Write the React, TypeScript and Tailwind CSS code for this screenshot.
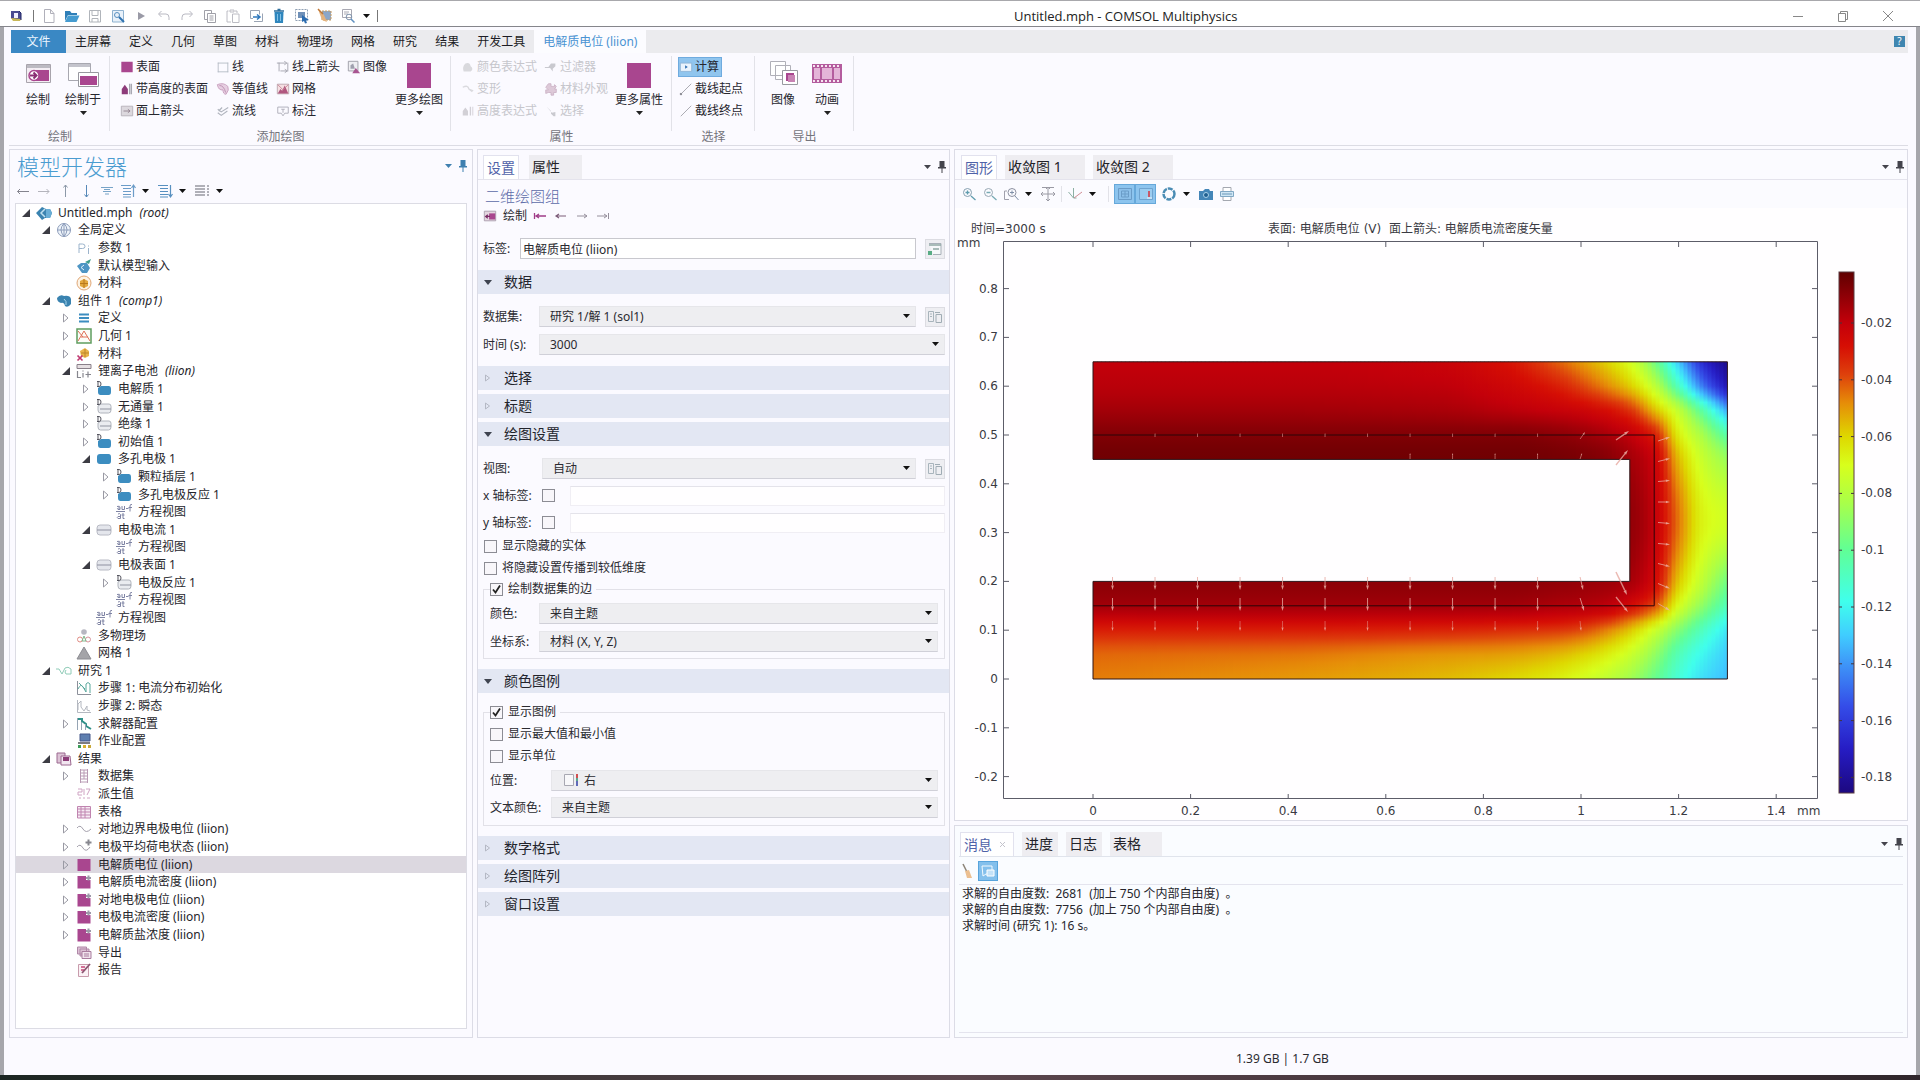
import { useMemo, type ReactNode } from 'react'
import { clsx } from 'clsx'

const BLUE = '#3c8dc0'
const PURPLE = '#a9468f'
const GRAY = '#9a9aa4'

/* ---------- icons ---------- */

function Svg({ children, size = 16 }: { children: ReactNode; size?: number }) {
  return (
    <svg width={size} height={size} viewBox="0 0 16 16" fill="none" aria-hidden="true" className="shrink-0">
      {children}
    </svg>
  )
}

function Caret({ className = 'fill-[#111]' }: { className?: string }) {
  return (
    <svg width="7" height="4" viewBox="0 0 7 4" aria-hidden="true" className={clsx('shrink-0', className)}>
      <path d="M0 0h7L3.5 4z" />
    </svg>
  )
}

function Pin({ color = '#44444c' }: { color?: string }) {
  return (
    <svg width="8" height="12" viewBox="0 0 8 12" aria-hidden="true">
      <path d="M1.500 0h5v6H8v1.500H4.500V12h-1V7.500H0V6h1.500z" fill={color} />
    </svg>
  )
}

const blob = 'M4 3h8.500q2.500 0 2.500 3v4q0 3-2.500 3H4q-3 0-3-3V6q0-3 3-3z'
const smallBlob = 'M5 5h8q2 0 2 2.500v3.500q0 3-2.500 3h-8Q2 14 2 11V7z'
const letterD = <path d="M1 .500h2q2 0 2 2.500t-2 2.500H1M2 .500v5" stroke="#55555f" />

const icons: Record<string, ReactNode> = {
  logo: (
    <>
      <path d="M3 3h8l2 2v7H5l-2-2z" fill="#4a4a90" />
      <path d="M6 5h4v5H6z" fill="#f2f0ff" />
      <path d="M3 10l2 3h7l1-2z" fill="#c8b858" />
      <path d="M11 3l2 2v7" stroke="#222868" />
    </>
  ),
  newDoc: <path d="M3.500 1.500h6l3.500 4v9H3.500zM9.500 1.500v4H13" stroke="#b0b0ba" />,
  open: (
    <>
      <path d="M1 3h5l1.500 2H13v2H4l-3 6z" fill="#2f7fb8" />
      <path d="M4 7.500h11.500L12.500 14H1z" fill="#459bd0" />
    </>
  ),
  save: <path d="M2.500 2.500h11v11.500h-11zM5 2.500v5h6v-5M5 14v-3.500h6V14" stroke="#b0b4ba" />,
  saveAs: (
    <>
      <path d="M2.500 2.500h11v11.500h-11z" stroke="#8fb2d0" fill="#e8f1fa" />
      <circle cx="7" cy="7" r="2.500" stroke="#5890c0" />
      <path d="M9 9l5 5" stroke="#2f72b0" strokeWidth="2" />
    </>
  ),
  play: <path d="M5 4v8l7-4z" fill="#9a9aa6" />,
  undo: <path d="M5.500 3L2.500 6l3 3M3 6h7q3 0 3 3.500V12" stroke="#b9b9c2" />,
  redo: <path d="M10.500 3l3 3-3 3M13 6H6Q3 6 3 9.500V12" stroke="#b9b9c2" />,
  copy: <path d="M2.500 2.500h7V5M2.500 2.500v9H5M5.500 5.500h8v9h-8zM7.500 8h4M7.500 10h4M7.500 12h4" stroke="#a0a0a8" />,
  paste: <path d="M3.500 3H2v11h4M5 2h4v2H5zM10 3h2v2M7.500 6h6.500v8.500H7.500z" stroke="#bcbcc4" />,
  duplicate: (
    <>
      <path d="M2.500 2.500h9v4M2.500 2.500v8H5M6 13.500h8.500v-8" stroke="#9aa4b4" />
      <path d="M5 9h6M9 6.500L12 9l-3 2.500" stroke="#2f78bc" strokeWidth="1.500" />
    </>
  ),
  trash: (
    <>
      <path d="M3.500 4h9l-.500 11H4z" fill="#2f86bd" />
      <path d="M3 3h10M6.500 1.500h3" stroke="#2f6f9d" strokeWidth="1.500" />
      <path d="M6.500 6v7M9.500 6v7" stroke="#7fc0e6" />
    </>
  ),
  select: (
    <>
      <path d="M1.500 1.500h12v11h-12z" stroke="#90a0b4" strokeDasharray="2 1" />
      <path d="M4 4h7v6H4z" fill="#6f90b8" />
      <path d="M8 7l7 5-3 .500L13 15l-2 .500-1-2.500-2 1z" fill="#2c6cb0" />
    </>
  ),
  brush: (
    <>
      <path d="M5 3h9v9H5z" fill="#8ba6c8" stroke="#c89c60" strokeDasharray="2 1" />
      <path d="M1 1l6 6 3 7-5-2z" fill="#e5b27c" />
      <path d="M1 1l5 5" stroke="#c07838" strokeWidth="1.500" />
    </>
  ),
  find: (
    <>
      <path d="M2.500 1.500h9v8h-9zM4 4h5M4 6h4" stroke="#a8a8b2" />
      <circle cx="9" cy="9" r="2.800" stroke="#7f93ac" />
      <path d="M11 11l3.500 3.500" stroke="#5f8fc0" strokeWidth="1.500" />
    </>
  ),
  square: <path d="M1.500 2h13v12h-13z" fill={PURPLE} />,
  heightSurface: (
    <>
      <path d="M2 14V8l3.500-5L9 8v6z" fill="#8d3b7a" />
      <path d="M11 2v12M13 2v12" stroke="#a8a8b2" strokeWidth="1.500" />
    </>
  ),
  arrowSurface: (
    <>
      <path d="M1.500 2.500h13v11h-13z" fill="#dcd8de" stroke="#b5b0b8" />
      <path d="M4 8h7M9 6l2.500 2L9 10" stroke="#90808e" />
    </>
  ),
  line: <path d="M2 3.500h12M2.500 3v11M13.500 3v11M2 13.500h12" stroke="#b4bac4" />,
  contour: (
    <>
      <path d="M1.500 3q7-3 12 2 2 4-2 9Q8 14 8 9q-5 1-6.500-6z" fill="#e6cfe1" stroke="#c79dbd" />
      <path d="M4 4q5 0 7 8" stroke="#b98aae" />
    </>
  ),
  stream: <path d="M2 6l4 3 8-5M2 10l4 3 7-5M3 8l4-4" stroke="#b0b4be" strokeWidth="1.300" />,
  lineArrow: <path d="M1 3.500h10M3.500 3v10M13.500 3v10M5 12.500h7M9.500 1.500l3 2-3 2M10 10.500l3 2-3 2" stroke="#a0a0aa" />,
  mesh: (
    <>
      <path d="M1.500 2.500h13v11h-13z" fill="#f5dfe2" stroke="#b9a4ac" />
      <path d="M2 13l3-5 2 2 3-6 4 9z" fill="#b0577f" />
      <path d="M2 3l6 6 6-6" stroke="#c77f92" />
    </>
  ),
  annotate: <path d="M2 3.500h12v7h-4l-2 3-2-3H2zM6 6h4M8 6v4" stroke="#a9a9b5" />,
  image: (
    <>
      <path d="M1.500 1.500h11v11h-11z" stroke="#9a9aa4" fill="#eeeef2" />
      <path d="M4 10V6l3-2 2 6z" fill="#9fa0ae" />
      <path d="M6 15l4-6 5 6z" fill="#a85591" />
    </>
  ),
  dimPalette: <path d="M3 13q-2-5 2-9 5-2 6 3 4 3 0 6z" fill="#d9d9dd" />,
  dimDeform: <path d="M2 6q6-3 7 2l5 2M9 8l4 3" stroke="#dadade" strokeWidth="1.500" />,
  dimHeight: <path d="M2 13V8l3-4 3 4v5zM10 3h1.500v10H10zM13 3h1v10h-1z" fill="#d2d0d6" />,
  dimFilter: <path d="M1 8h4l3-4h5v3l-3 3v3L7 9H1z" fill="#c9c9cf" />,
  dimMaterial: <path d="M5 2h3v3h4V3l2 2-2 3h2v4h-3v3H8v-3H5L2 13V9h3L2 6z" fill="#ddc9d8" stroke="#cbb2c6" />,
  dimSelect: <path d="M3 3l5 5v3l3 3h2V9l-4 1" fill="#c9c9cf" />,
  compute: (
    <>
      <path d="M1.500 3.500h13v9.500h-13z" fill="#eaf4fd" stroke="#8cb2d6" />
      <path d="M7 6v4l3-2z" fill="#2f6fb0" />
    </>
  ),
  cut: <path d="M2 14L14 2" stroke="#a0a0a8" />,
  cutStart: (
    <>
      <path d="M3 13L14 2" stroke="#a0a0a8" />
      <path d="M1 12.500h2.500V15H1z" fill="#909098" />
    </>
  ),
  root: (
    <>
      <path d="M0 8l6-6 4 2h4l2 4-2 5H9l-3 2z" fill="#3a83b0" />
      <path d="M9 4l-4 4 4 4" stroke="#bfe0f0" strokeWidth="1.500" />
      <path d="M10 4h4l2 4-2 5h-4z" fill="#69aed6" />
    </>
  ),
  globe: (
    <>
      <circle cx="8" cy="8" r="6.500" stroke="#8c9cba" fill="#eef4fa" />
      <path d="M1.500 8h13M8 1.500v13M8 1.500q-6 6 0 13M8 1.500q6 6 0 13" stroke="#8c9cba" />
    </>
  ),
  param: <path d="M3 13V4h3.500q2.500 0 2.500 2.300T6.500 8.500H3M12.500 8v6M12.500 5.500v1" stroke="#9cb4cc" />,
  modelInput: (
    <>
      <path d="M1 8l4-3h6l3 5-3 5H6z" fill="#4d95c4" />
      <path d="M8 7l-3 2.500L8 12" stroke="#e4f2fa" />
      <path d="M9 4l6-3-2 5z" fill="#3e9c8c" />
    </>
  ),
  material: (
    <>
      <circle cx="8" cy="8" r="7" stroke="#e0a878" fill="#fdf3e4" />
      <path d="M4 6l4-2 4 2v5l-4 2-4-2z" fill="#e3a83f" />
      <path d="M8 4v9M4 8.500h8" stroke="#b9791c" />
    </>
  ),
  component: (
    <>
      <path d="M1 5q3-4 7-2 6-1 7 3v5q-3 4-6 2-1-4-4-3-4-1-4-5z" fill="#3a83b0" />
      <path d="M8 6q3 2 2 6" stroke="#a5d4ea" />
    </>
  ),
  definitions: <path d="M3 4.500h10M3 8h10M3 11.500h10" stroke={BLUE} strokeWidth="2.200" />,
  geometry: (
    <>
      <path d="M1 1h14v14H1z" stroke="#5f9d5f" fill="#fbfdf8" strokeWidth="1.500" />
      <path d="M2 13L8 3l6 10M5 9h7M2 3l5 6" stroke="#e07058" />
    </>
  ),
  materialX: (
    <>
      <path d="M4 5l5-3 4 3v5l-4 2-4-2z" fill="#e9b44c" />
      <path d="M9 3v8M5 7h8" stroke="#bd8628" />
      <path d="M1.500 9.500l5 5M6.500 9.500l-5 5" stroke="#c03a72" strokeWidth="1.700" />
    </>
  ),
  battery: (
    <>
      <path d="M1 1.500h14v4H1z" stroke="#8a808a" fill="#e6dfe2" />
      <path d="M1.500 8v6.500H5M7 10v4.500M7 7.500v1M12 8.500v6M9.500 11.500H15" stroke="#86868e" strokeWidth="1.200" />
    </>
  ),
  blue: <path d={blob} fill={BLUE} />,
  blueD: (
    <>
      <path d={smallBlob} fill={BLUE} />
      {letterD}
    </>
  ),
  gray: (
    <>
      <path d={blob} fill="#e4e6ec" stroke="#b8bac4" />
      <path d="M1 8h14" stroke="#8e90a0" />
    </>
  ),
  grayD: (
    <>
      <path d={smallBlob} fill="#eaecf0" stroke="#b0b4bc" />
      <path d="M4 10h11" stroke="#9094a0" />
      {letterD}
    </>
  ),
  equation: (
    <path
      d="M1 2.500q3-1 3 1v2H2q-1-1 0-1.500h2M6 2v3.500h2.500V2M0 7.500h9M2 10q2-1 2.500.500v4H2q-1.500-1 0-2h2M7 9v5.500h1.500M5.500 11h3M10 4.500h2.500M16 .500q-2-.500-2 1.500v5.500M12.500 3.500h3.500"
      stroke="#7f84a4"
    />
  ),
  multi: (
    <>
      <circle cx="8" cy="4" r="2.800" fill="#b8b8c2" />
      <circle cx="4" cy="11.500" r="2.500" stroke="#e08c84" />
      <circle cx="12" cy="11.500" r="2.500" stroke="#d8949c" />
      <path d="M6 13l2-5 2 5z" stroke="#7fb88c" />
    </>
  ),
  triangle: <path d="M8 2l7 12H1z" fill="#a4a4a8" stroke="#8c8c92" />,
  study: <path d="M0 6h3l3 5 3-6q3-2 6 1v5h-5q-2-2 0-4" stroke="#90ccb8" />,
  step1: (
    <>
      <path d="M1.500 1v13.500H15" stroke="#8c909a" />
      <path d="M2 9q3-6 5-2l3 5V4q2-3 4 0v9M3 3l6 6" stroke="#58a89c" />
    </>
  ),
  step2: <path d="M1.500 2v12.500H15M2 12V6l3-3v6l3 4 3-5v4l3 1" stroke="#b4b8c0" />,
  solver: (
    <>
      <path d="M1.500 2v12M5.500 5v9" stroke="#96a4b4" />
      <path d="M2 3h4v2l4 3v2l5 3" stroke="#2f9088" strokeWidth="2" />
      <path d="M9.500 8v6" stroke="#96a4b4" />
    </>
  ),
  job: (
    <>
      <path d="M4 1h10v7H4z" fill="#5f7fb0" stroke="#47588a" />
      <path d="M2 10h12" stroke="#505058" strokeWidth="1.500" />
      <path d="M2 12h3v3H2z" fill="#3c9c58" />
      <path d="M7 12h3v3H7z" fill="#d8b030" />
      <path d="M12 12h3v3h-3z" fill="#c8a838" />
    </>
  ),
  results: (
    <>
      <path d="M1 2h8v10H1z" fill="#dcc4d6" stroke="#9c6890" />
      <path d="M5 5h9l1 9H5z" fill="#f2e6f0" stroke="#9c6890" />
      <path d="M7 6h6v4H7z" fill="#8c3c78" />
    </>
  ),
  dataset: <path d="M4 2h8M4 5h8M4 8h8M4 11h8M4 14h8M4.500 1v14M11.500 1v14M8 2v9" stroke="#b99ab4" />,
  derived: <path d="M2 3h4v3H2v3h4M8 3v6M10 3h4l-3 6M3 12h2M7 12h2M11 12h3" stroke="#d0a4c4" />,
  table: <path d="M1.500 2.500h13v11.500h-13zM2 5h12M2 8h12M2 11h12M5 2v12M9 2v12" stroke="#c084b0" fill="#f6eaf3" />,
  wave: <path d="M1 7q3-4 6 1t8 0" stroke="#a4a0ac" />,
  waveStar: (
    <>
      <path d="M1 8q3-4 6 1t7-1" stroke="#a4a0ac" />
      <path d="M9.500 3.500h6M12.500.500v6" stroke="#86868e" strokeWidth="2" />
    </>
  ),
  purpleStar: (
    <>
      <path d="M1.500 2H10v4h4.500v8.500h-13z" fill={PURPLE} />
      <path d="M10 4h5M12.500 1.500v5" stroke="#9c98a8" strokeWidth="2" />
    </>
  ),
  export: (
    <>
      <path d="M1.500 2h9v7h-9zM4 4h9v7H4z" fill="#dcc0d4" stroke="#b088a8" />
      <path d="M6 6.500h9v7H6z" fill="#f0e2ec" stroke="#a87c9e" />
      <path d="M8 9h5M8 11h5" stroke="#a87c9e" />
    </>
  ),
  report: (
    <>
      <path d="M2.500 2.500h10v12h-10z" stroke="#c89cac" fill="#fbf2f6" />
      <path d="M5 5h4M5 8h3" stroke="#c84878" strokeWidth="1.300" />
      <path d="M6 11l8-9" stroke="#8c5470" strokeWidth="1.800" />
    </>
  ),
  zoomIn: (
    <>
      <circle cx="6.500" cy="6.500" r="4" stroke="#86a0b0" />
      <path d="M10 10l4.500 4M6.500 4.500v4M4.500 6.500h4" stroke="#5f9cae" strokeWidth="1.300" />
    </>
  ),
  zoomOut: (
    <>
      <circle cx="6.500" cy="6.500" r="4" stroke="#98a8b4" />
      <path d="M10 10l4.500 4M4.500 6.500h4" stroke="#78aab4" strokeWidth="1.300" />
    </>
  ),
  zoomBox: (
    <>
      <path d="M6 13.500H1.500V5H4" stroke="#a0a0ac" />
      <circle cx="9" cy="6.500" r="4" stroke="#8c90a0" />
      <path d="M12 10l3.500 4M9 4.500v4M7 6.500h4" stroke="#8090a8" />
    </>
  ),
  move: <path d="M8 1v14M1 8h14M6 3l2-2 2 2M6 13l2 2 2-2M3 6L1 8l2 2M13 6l2 2-2 2M2 1.500h12" stroke="#9a9aa4" />,
  axes: (
    <>
      <path d="M6.500 2v10M6.500 12l-5-6M6.500 12h3" stroke="#8cb0a4" />
      <path d="M7 12l8-6" stroke="#d08c94" />
    </>
  ),
  grid: <path d="M1.500 2.500h13v11h-13zM4.500 5h7v6h-7zM8 5v6M5 8h6" stroke="#6a9cc8" fill="#8cc0ea" />,
  legend: (
    <>
      <path d="M1.500 2.500h13v11h-13z" stroke="#6fa4d0" fill="#9accf0" />
      <path d="M11 5v6" stroke="#c85868" strokeWidth="2" />
      <path d="M9 12h5" stroke="#e8f4fc" />
    </>
  ),
  ring: <circle cx="8" cy="8" r="5.500" stroke="#4a8cb4" strokeWidth="2.500" strokeDasharray="5 1" />,
  camera: (
    <>
      <path d="M1 5h4l2-2h4l1 2h3v9H1z" fill="#4486b8" />
      <circle cx="8" cy="9" r="2.500" fill="#1f5f90" stroke="#a8d0ea" />
    </>
  ),
  print: (
    <>
      <path d="M4 1.500h8V6H4zM4 10h8v4.500H4z" stroke="#a4a8b0" fill="#fff" />
      <path d="M1.500 5.500h13v5h-13z" fill="#cfe6f4" stroke="#80a8c4" />
      <path d="M3 8h10" stroke="#6a98b8" />
    </>
  ),
  left: <path d="M2.500 8.500H14M5 6L2.500 8.500 5 11" stroke="#84848e" />,
  right: <path d="M2 8.500h11M10.500 6l2.500 2.500-2.500 2.500" stroke="#b4b4bc" />,
  up: <path d="M8.500 2v12M6.500 4.500l2-2.500 2 2.500" stroke="#8c98a8" />,
  down: <path d="M8.500 2v12M6.500 11.500l2 2.500 2-2.500" stroke="#5688b8" />,
  show: <path d="M2 4.500h12M4 8.500h8M6 11h4M5 6.500h6" stroke="#78a4c8" strokeWidth="1.200" />,
  collapse: <path d="M1 2.500h10M3 5.500h8M3 8.500h8M3 11.500h8M3 14h8M13.500 14V3M11.500 5l2-3 2 3" stroke="#6c9cc8" strokeWidth="1.200" />,
  expand: <path d="M1 2.500h10M3 5.500h8M3 8.500h8M3 11.500h8M3 14h8M13.500 2v11M11.500 11l2 3 2-3" stroke="#5890c0" strokeWidth="1.200" />,
  list: <path d="M1 3h10M1 6h10M1 9h10M1 12h10M13 3h2M13 6h2M13 9h2M13 12h2" stroke="#b0b0b8" strokeWidth="1.800" />,
  plot: (
    <>
      <path d="M1.500 2.500h13v11h-13z" fill="#e4d6e0" stroke="#a89cac" />
      <path d="M7 5h7v7H7z" fill={PURPLE} />
      <path d="M3 8.500h5M5.500 6.500l-2.500 2 2.500 2" stroke="#7a2c66" strokeWidth="1.300" />
    </>
  ),
  first: <path d="M2.500 5v6M4 8h10M7 6L4 8l3 2" stroke="#a03c88" strokeWidth="1.300" />,
  prev: <path d="M3 8h10M6 6L3 8l3 2" stroke="#7c5c78" strokeWidth="1.200" />,
  next: <path d="M3 8h10M10 6l3 2-3 2" stroke="#96909c" />,
  last: <path d="M2 8h10M9 6l3 2-3 2M13.500 5v6" stroke="#96909c" />,
  tagPanel: (
    <>
      <path d="M2 2.500h12v11H6" stroke="#a8b0b8" fill="#f6f8fa" />
      <path d="M2 4h12M6 8h6" stroke="#90a8a4" strokeWidth="1.500" />
      <path d="M1 10h4v4H1z" fill="#58ac84" />
    </>
  ),
  source: (
    <>
      <path d="M1.500 2.500h5v10h-5zM3 5h2M3 7.500h2" stroke="#a8b4bc" />
      <path d="M9 5.500h5.500v8H9zM8 3.500h5" stroke="#a0acb4" />
    </>
  ),
  broom: (
    <>
      <path d="M3 1l4 8" stroke="#8c8478" strokeWidth="1.500" />
      <path d="M5 8l4-1 3 8H7z" fill="#ecbf90" />
    </>
  ),
  scroll: (
    <>
      <path d="M2 3h10v8H6l-3 2z" stroke="#f2faff" />
      <path d="M7 7h7v6H7z" fill="#c4e2f8" stroke="#fff" />
    </>
  ),
}

function Icon({ name, size }: { name: string; size?: number }) {
  return <Svg size={size}>{icons[name]}</Svg>
}

/* ---------- window chrome ---------- */

const quickAccess = [
  ['newDoc', '新建'], ['open', '打开'], ['save', '保存'], ['saveAs', '另存为'], ['play', '运行'],
  ['undo', '撤消'], ['redo', '恢复'], ['copy', '复制'], ['paste', '粘贴'], ['duplicate', '复制粘贴'],
  ['trash', '删除'], ['select', '选择'], ['brush', '清除'], ['find', '查找'],
]

function TitleBar() {
  return (
    <header className="relative flex h-[27px] items-center border-t border-b border-t-[#a8a8ac] border-b-[#85858b] bg-white pt-1">
      <div className="flex items-center gap-[7px] pl-2">
        <Icon name="logo" />
        <span className="ml-[2px] h-3 w-px bg-[#777]" />
        {quickAccess.map(([icon, label]) => (
          <button key={icon} type="button" aria-label={label}>
            <Icon name={icon} />
          </button>
        ))}
        <Caret />
        <span className="h-3 w-px bg-[#777]" />
      </div>
      <h1 className="absolute left-[1014px] font-['Open_Sans',sans-serif] text-[13px] leading-4 text-[#222]">
        Untitled.mph - COMSOL Multiphysics
      </h1>
      <div className="ml-auto flex items-center gap-[29px] pr-6">
        <button type="button" aria-label="最小化">
          <Svg><path d="M3 8.500h10" stroke="#888" /></Svg>
        </button>
        <button type="button" aria-label="还原">
          <Svg><path d="M3.500 5.500h7v8h-7zM5.500 5V3.500h7v8H11" stroke="#888" /></Svg>
        </button>
        <button type="button" aria-label="关闭">
          <Svg><path d="M3 3l10 10M13 3L3 13" stroke="#888" /></Svg>
        </button>
      </div>
    </header>
  )
}

const menus = ['主屏幕', '定义', '几何', '草图', '材料', '物理场', '网格', '研究', '结果', '开发工具']

function MenuBar() {
  return (
    <nav className="ml-[2px] flex h-[23px] items-stretch bg-[#ebebee] text-[12px] leading-[22px]">
      <button type="button" className="w-[55px] bg-[#3a88c4] text-[#eaf5ff]">文件</button>
      {menus.map((m) => (
        <button key={m} type="button" className="px-[9px] text-[#1c1c24]">
          {m}
        </button>
      ))}
      <button type="button" className="bg-[#fcfcff] px-[9px] text-[#4a93d2]">电解质电位 (liion)</button>
      <button
        type="button"
        aria-label="帮助"
        className="mr-[3px] ml-auto h-[11px] w-[11px] self-center bg-[#3f86b0] text-[10px] leading-[11px] text-white"
      >
        ?
      </button>
    </nav>
  )
}

type CmdProps = { icon: string; label: string; disabled?: boolean; active?: boolean }

function Cmd({ icon, label, disabled, active }: CmdProps) {
  return (
    <button
      type="button"
      disabled={disabled}
      className={clsx(
        'flex h-5 items-center gap-[2px] self-start border pr-[2px] whitespace-nowrap',
        active ? 'border-[#6fabdf] bg-[#90c5ee]' : 'border-transparent',
        disabled ? 'text-[#c6c6cc]' : 'text-[#26262e]',
      )}
    >
      <Icon name={icon} size={14} />
      {label}
    </button>
  )
}

function CmdColumn({ items, width }: { items: CmdProps[]; width: string }) {
  return (
    <div className={clsx('flex shrink-0 flex-col gap-[2px] pt-px', width)}>
      {items.map((item) => (
        <Cmd key={item.label} {...item} />
      ))}
    </div>
  )
}

function BigCmd({ label, menu, width, children }: { label: string; menu?: boolean; width: string; children: ReactNode }) {
  return (
    <button type="button" className={clsx('flex shrink-0 flex-col items-center pt-1 text-[#26262e]', width)}>
      <svg width="32" height="28" viewBox="0 0 32 28" fill="none" aria-hidden="true">
        {children}
      </svg>
      <span className="mt-1 leading-4 whitespace-nowrap">{label}</span>
      {menu && <Caret className="mt-[3px] fill-[#222]" />}
    </button>
  )
}

function RibbonGroup({ title, width, pad, children }: { title: string; width: string; pad: string; children: ReactNode }) {
  return (
    <section className={clsx('flex shrink-0 flex-col', width)}>
      <div className={clsx('flex h-[75px] border-r border-[#e2e2e8]', pad)}>{children}</div>
      <h2 className="text-center leading-3 text-[#74747c]">{title}</h2>
    </section>
  )
}

function Ribbon() {
  return (
    <div className="flex h-[93px] border-b border-[#dcdce4] bg-[#fbfaff] pt-[3px] pl-px text-[12px]">
      <RibbonGroup title="绘制" width="w-[100px]" pad="pl-2 gap-[3px]">
        <BigCmd label="绘制" width="w-10">
          <path d="M4.500 4.500h24v18h-24z" fill="#f4eef4" stroke="#a8a4ac" />
          <path d="M5 5h23v3H5z" fill="#bcbac2" />
          <path d="M13 10h14v11H13z" fill={PURPLE} />
          <circle cx="12" cy="15.500" r="5" fill="#fff" stroke={PURPLE} strokeWidth="1.500" />
          <path d="M8 15.500h6M11.500 12.500l3 3-3 3" stroke="#8a2f74" strokeWidth="2" />
        </BigCmd>
        <BigCmd label="绘制于" width="w-11" menu>
          <path d="M1.500 3.500h22v17h-22z" fill="#fff" stroke="#a8a8b0" />
          <path d="M2 4h21v3H2z" fill="#c4c4cc" />
          <path d="M11.500 12.500h20v14h-20z" fill="#fff" stroke="#98989f" />
          <path d="M13 16h17v9H13z" fill={PURPLE} />
        </BigCmd>
      </RibbonGroup>
      <RibbonGroup title="添加绘图" width="w-[341px]" pad="pl-[9px]">
        <CmdColumn
          width="w-[96px]"
          items={[
            { icon: 'square', label: '表面' },
            { icon: 'heightSurface', label: '带高度的表面' },
            { icon: 'arrowSurface', label: '面上箭头' },
          ]}
        />
        <CmdColumn
          width="w-[60px]"
          items={[
            { icon: 'line', label: '线' },
            { icon: 'contour', label: '等值线' },
            { icon: 'stream', label: '流线' },
          ]}
        />
        <CmdColumn
          width="w-[71px]"
          items={[
            { icon: 'lineArrow', label: '线上箭头' },
            { icon: 'mesh', label: '网格' },
            { icon: 'annotate', label: '标注' },
          ]}
        />
        <CmdColumn width="w-[47px]" items={[{ icon: 'image', label: '图像' }]} />
        <BigCmd label="更多绘图" width="w-[52px]" menu>
          <path d="M4 3h24v25H4z" fill={PURPLE} />
        </BigCmd>
      </RibbonGroup>
      <RibbonGroup title="属性" width="w-[221px]" pad="pl-[9px]">
        <CmdColumn
          width="w-[83px]"
          items={[
            { icon: 'dimPalette', label: '颜色表达式', disabled: true },
            { icon: 'dimDeform', label: '变形', disabled: true },
            { icon: 'dimHeight', label: '高度表达式', disabled: true },
          ]}
        />
        <CmdColumn
          width="w-[70px]"
          items={[
            { icon: 'dimFilter', label: '过滤器', disabled: true },
            { icon: 'dimMaterial', label: '材料外观', disabled: true },
            { icon: 'dimSelect', label: '选择', disabled: true },
          ]}
        />
        <BigCmd label="更多属性" width="w-[52px]" menu>
          <path d="M4 3h24v25H4z" fill={PURPLE} />
        </BigCmd>
      </RibbonGroup>
      <RibbonGroup title="选择" width="w-[83px]" pad="pl-[6px]">
        <CmdColumn
          width="w-[72px]"
          items={[
            { icon: 'compute', label: '计算', active: true },
            { icon: 'cutStart', label: '截线起点' },
            { icon: 'cut', label: '截线终点' },
          ]}
        />
      </RibbonGroup>
      <RibbonGroup title="导出" width="w-[99px]" pad="pl-2 gap-1">
        <BigCmd label="图像" width="w-10">
          <path d="M3.500 1.500h15v14h-15zM8.500 5.500h15v14h-15z" fill="#fff" stroke="#b0b0b8" />
          <path d="M15.500 10.500h15v14h-15z" fill="#fff" stroke="#989aa0" />
          <path d="M19 13h8v8h-8z" fill={PURPLE} />
          <path d="M21 15h7v7h-7z" fill="#c883b4" />
        </BigCmd>
        <BigCmd label="动画" width="w-10" menu>
          <path d="M1 4h30v19H1z" fill="#b45c9e" />
          <path d="M3 8h6v11H3zM11 8h10v11H11zM23 8h6v11h-6z" fill="#e4b4d8" />
          <path d="M2 6h28M2 21h28" stroke="#f6e4f0" strokeWidth="2" strokeDasharray="2 2" />
        </BigCmd>
      </RibbonGroup>
    </div>
  )
}

/* ---------- model tree ---------- */

type Node = { d: number; icon: string; text: string; tag?: string; open?: boolean; sel?: boolean }

const tree: Node[] = [
  { d: 0, icon: 'root', text: 'Untitled.mph', tag: '(root)', open: true },
  { d: 1, icon: 'globe', text: '全局定义', open: true },
  { d: 2, icon: 'param', text: '参数 1' },
  { d: 2, icon: 'modelInput', text: '默认模型输入' },
  { d: 2, icon: 'material', text: '材料' },
  { d: 1, icon: 'component', text: '组件 1', tag: '(comp1)', open: true },
  { d: 2, icon: 'definitions', text: '定义', open: false },
  { d: 2, icon: 'geometry', text: '几何 1', open: false },
  { d: 2, icon: 'materialX', text: '材料', open: false },
  { d: 2, icon: 'battery', text: '锂离子电池', tag: '(liion)', open: true },
  { d: 3, icon: 'blueD', text: '电解质 1', open: false },
  { d: 3, icon: 'grayD', text: '无通量 1', open: false },
  { d: 3, icon: 'grayD', text: '绝缘 1', open: false },
  { d: 3, icon: 'blueD', text: '初始值 1', open: false },
  { d: 3, icon: 'blue', text: '多孔电极 1', open: true },
  { d: 4, icon: 'blueD', text: '颗粒插层 1', open: false },
  { d: 4, icon: 'blueD', text: '多孔电极反应 1', open: false },
  { d: 4, icon: 'equation', text: '方程视图' },
  { d: 3, icon: 'gray', text: '电极电流 1', open: true },
  { d: 4, icon: 'equation', text: '方程视图' },
  { d: 3, icon: 'gray', text: '电极表面 1', open: true },
  { d: 4, icon: 'grayD', text: '电极反应 1', open: false },
  { d: 4, icon: 'equation', text: '方程视图' },
  { d: 3, icon: 'equation', text: '方程视图' },
  { d: 2, icon: 'multi', text: '多物理场' },
  { d: 2, icon: 'triangle', text: '网格 1' },
  { d: 1, icon: 'study', text: '研究 1', open: true },
  { d: 2, icon: 'step1', text: '步骤 1: 电流分布初始化' },
  { d: 2, icon: 'step2', text: '步骤 2: 瞬态' },
  { d: 2, icon: 'solver', text: '求解器配置', open: false },
  { d: 2, icon: 'job', text: '作业配置' },
  { d: 1, icon: 'results', text: '结果', open: true },
  { d: 2, icon: 'dataset', text: '数据集', open: false },
  { d: 2, icon: 'derived', text: '派生值' },
  { d: 2, icon: 'table', text: '表格' },
  { d: 2, icon: 'wave', text: '对地边界电极电位 (liion)', open: false },
  { d: 2, icon: 'waveStar', text: '电极平均荷电状态 (liion)', open: false },
  { d: 2, icon: 'square', text: '电解质电位 (liion)', open: false, sel: true },
  { d: 2, icon: 'purpleStar', text: '电解质电流密度 (liion)', open: false },
  { d: 2, icon: 'purpleStar', text: '对地电极电位 (liion)', open: false },
  { d: 2, icon: 'purpleStar', text: '电极电流密度 (liion)', open: false },
  { d: 2, icon: 'purpleStar', text: '电解质盐浓度 (liion)', open: false },
  { d: 2, icon: 'export', text: '导出' },
  { d: 2, icon: 'report', text: '报告' },
]

const indent = ['pl-px', 'pl-[21px]', 'pl-[41px]', 'pl-[61px]', 'pl-[81px]']

function TreeRow({ node }: { node: Node }) {
  return (
    <li className={clsx('flex min-h-0 items-center', indent[node.d], node.sel && 'bg-[#dcd8e0]')}>
      <span className="flex w-[18px] shrink-0 justify-center">
        {node.open === true && (
          <svg width="8" height="8" viewBox="0 0 8 8" aria-hidden="true"><path d="M8 0v8H0z" fill="#3c3c44" /></svg>
        )}
        {node.open === false && (
          <svg width="6" height="10" viewBox="0 0 6 10" fill="none" aria-hidden="true">
            <path d="M.500 1v8l4.500-4z" stroke={GRAY} />
          </svg>
        )}
      </span>
      <span className="ml-px flex">
        <Icon name={node.icon} />
      </span>
      <span className="ml-[6px] leading-4 whitespace-pre">
        {node.text}
        {node.tag && <i className="ml-[7px]">{node.tag}</i>}
      </span>
    </li>
  )
}

function ToolButton({ icon, label, menu }: { icon: string; label: string; menu?: boolean }) {
  return (
    <button type="button" aria-label={label} className={clsx('flex items-center gap-[6px]', menu && 'pr-[3px]')}>
      <Icon name={icon} />
      {menu && <Caret />}
    </button>
  )
}

function ModelBuilder() {
  return (
    <section className="flex w-[464px] shrink-0 flex-col border border-[#dcdce6] bg-[#fbfaff] px-[5px] pt-[3px] pb-2">
      <div className="flex items-center">
        <h2 className="pl-[2px] text-[22px] leading-[26px] font-light text-[#4a9cd0]">模型开发器</h2>
        <div className="ml-auto flex items-center gap-[7px]">
          <Caret className="fill-[#3f80b0]" />
          <Pin color="#3f80b0" />
        </div>
      </div>
      <div className="flex h-6 items-center gap-[5px] pb-px">
        <ToolButton icon="left" label="上一个" />
        <ToolButton icon="right" label="下一个" />
        <ToolButton icon="up" label="上移" />
        <ToolButton icon="down" label="下移" />
        <ToolButton icon="show" label="显示" />
        <ToolButton icon="collapse" label="折叠" menu />
        <ToolButton icon="expand" label="展开" menu />
        <ToolButton icon="list" label="列表" menu />
      </div>
      <div className="flex-1 border border-[#dcdce4] bg-white text-[12px] text-[#26262c]">
        <ul className="grid h-[775px] auto-rows-fr">
          {tree.map((node, i) => (
            <TreeRow key={i} node={node} />
          ))}
        </ul>
      </div>
    </section>
  )
}

/* ---------- settings ---------- */

function PanelTools() {
  return (
    <div className="ml-auto flex h-6 items-center gap-[7px] pr-[3px]">
      <Caret className="fill-[#44444c]" />
      <Pin />
    </div>
  )
}

function Tab({ label, active, width }: { label: string; active?: boolean; width: string }) {
  return (
    <button
      type="button"
      className={clsx(
        'h-6 pl-[3px] text-left text-[14px] leading-5 whitespace-nowrap',
        width,
        active ? 'border border-b-0 border-[#e2e2ee] bg-white text-[#4f62a8]' : 'bg-[#eeedf1] text-[#222228]',
      )}
    >
      {label}
    </button>
  )
}

function SectionHead({ title, open }: { title: string; open?: boolean }) {
  return (
    <h3>
      <button
        type="button"
        aria-expanded={!!open}
        className="flex h-6 w-full items-center gap-3 bg-[#e3e7f3] pl-[6px] text-[14px] leading-5 text-[#22242c]"
      >
        <svg width="8" height="8" viewBox="0 0 8 8" fill="none" aria-hidden="true">
          {open ? <path d="M0 2h8L4 7z" fill="#3f4450" /> : <path d="M1.500 1v6l4-3z" stroke="#b4b8c4" />}
        </svg>
        {title}
      </button>
    </h3>
  )
}

type SelectProps = { id: string; label: string; value: string; labelWidth: string; textPad?: string; source?: boolean; icon?: ReactNode }

function SelectRow({ id, label, value, labelWidth, textPad = 'pl-[10px]', source, icon }: SelectProps) {
  return (
    <div className="flex h-[21px] items-center">
      <label htmlFor={id} className={clsx('shrink-0', labelWidth)}>{label}</label>
      <div className="relative h-full flex-1">
        <select
          id={id}
          className={clsx('h-full w-full appearance-none border border-[#e6e6ea] border-b-[#d0d0d8] bg-[#eeeef1] leading-4', textPad)}
        >
          <option>{value}</option>
        </select>
        {icon && <span className="pointer-events-none absolute top-[2px] left-3">{icon}</span>}
        <span className="pointer-events-none absolute top-2 right-[6px] flex">
          <Caret />
        </span>
      </div>
      {source && (
        <button type="button" aria-label="转到源" className="ml-[9px] flex h-5 w-5 items-center justify-center border border-[#dcdce2] bg-[#eeeef2]">
          <Icon name="source" />
        </button>
      )}
    </div>
  )
}

function Check({ id, label, checked }: { id: string; label?: string; checked?: boolean }) {
  return (
    <span className="flex items-center gap-[5px]">
      <span className="grid">
        <input
          id={id}
          type="checkbox"
          defaultChecked={checked}
          className="peer col-start-1 row-start-1 h-[13px] w-[13px] appearance-none border border-[#8c8c94] bg-[#f8f6fa]"
        />
        <svg
          width="13"
          height="13"
          viewBox="0 0 13 13"
          fill="none"
          aria-hidden="true"
          className="pointer-events-none col-start-1 row-start-1 hidden peer-checked:block"
        >
          <path d="M3 6.500l2.500 3 4.500-7" stroke="#222" strokeWidth="1.800" />
        </svg>
      </span>
      {label && <label htmlFor={id} className="leading-4">{label}</label>}
    </span>
  )
}

function AxisLabelRow({ axis }: { axis: string }) {
  return (
    <div className="flex h-[21px] items-center">
      <label htmlFor={`${axis}-on`} className="w-[59px]">{axis} 轴标签:</label>
      <Check id={`${axis}-on`} />
      <input
        type="text"
        aria-label={`${axis} 轴标签文本`}
        className="ml-[15px] h-5 min-w-0 flex-1 border border-[#f0eef4] border-t-[#e4e3ea] bg-[#fffeff]"
      />
    </div>
  )
}

function Settings() {
  return (
    <section className="flex w-[473px] shrink-0 flex-col border border-[#dcdce6] bg-[#fbfaff] text-[12px] text-[#2a2a30]">
      <div className="flex items-end gap-[10px] border-b border-[#e4e3ec] pt-[5px] pl-[5px]">
        <Tab label="设置" width="w-9" active />
        <Tab label="属性" width="w-[53px]" />
        <PanelTools />
      </div>
      <div className="pr-1 pl-[5px]">
        <h2 className="mt-[6px] pl-[2px] text-[15px] leading-5 font-light text-[#5b6aa8]">二维绘图组</h2>
        <div className="flex h-5 items-center gap-[5px]">
          <button type="button" className="flex items-center gap-[6px] leading-4">
            <Icon name="plot" size={14} />
            绘制
          </button>
          <ToolButton icon="first" label="第一个" />
          <ToolButton icon="prev" label="上一个" />
          <ToolButton icon="next" label="下一个" />
          <ToolButton icon="last" label="最后一个" />
        </div>
        <div className="mt-3 flex h-[21px] items-center">
          <label htmlFor="tag" className="w-[37px]">标签:</label>
          <input
            id="tag"
            defaultValue="电解质电位 (liion)"
            className="h-full min-w-0 flex-1 border border-[#c8c8ce] bg-white pl-[2px]"
          />
          <button type="button" aria-label="名称" className="ml-[9px] flex h-5 w-5 items-center justify-center border border-[#dcdce2] bg-[#eeeef2]">
            <Icon name="tagPanel" />
          </button>
        </div>
      </div>

      <div className="mt-[11px] flex flex-col">
        <SectionHead title="数据" open />
        <div className="flex flex-col gap-[7px] pt-3 pr-1 pb-[11px] pl-[5px]">
          <SelectRow id="dataset" label="数据集:" value="研究 1/解 1 (sol1)" labelWidth="w-[56px]" source />
          <SelectRow id="time" label="时间 (s):" value="3000" labelWidth="w-[56px]" />
        </div>
        <div className="flex flex-col gap-1">
          <SectionHead title="选择" />
          <SectionHead title="标题" />
          <SectionHead title="绘图设置" open />
        </div>
        <div className="flex flex-col pt-3 pr-1 pb-[10px] pl-[5px]">
          <SelectRow id="view" label="视图:" value="自动" labelWidth="w-[59px]" source />
          <div className="mt-[6px] flex flex-col gap-[6px]">
            <AxisLabelRow axis="x" />
            <AxisLabelRow axis="y" />
          </div>
          <div className="mt-[5px] flex flex-col gap-[6px] pl-px">
            <Check id="hidden" label="显示隐藏的实体" />
            <Check id="propagate" label="将隐藏设置传播到较低维度" />
          </div>
          <fieldset className="mt-[5px] border border-[#e2e1e8] px-[6px] pb-[6px]">
            <legend className="pr-1">
              <Check id="edges" label="绘制数据集的边" checked />
            </legend>
            <div className="mt-[6px] flex flex-col gap-[7px]">
              <SelectRow id="color" label="颜色:" value="来自主题" labelWidth="w-[49px]" />
              <SelectRow id="frame" label="坐标系:" value="材料  (X, Y, Z)" labelWidth="w-[49px]" />
            </div>
          </fieldset>
        </div>
        <SectionHead title="颜色图例" open />
        <div className="pt-[11px] pr-1 pb-[10px] pl-[5px]">
          <fieldset className="border border-[#e2e1e8] px-[6px] pb-[7px]">
            <legend className="pr-1">
              <Check id="showLegend" label="显示图例" checked />
            </legend>
            <div className="mt-[6px] flex flex-col gap-[6px]">
              <Check id="minmax" label="显示最大值和最小值" />
              <Check id="unit" label="显示单位" />
            </div>
            <div className="mt-[6px] flex flex-col gap-[6px]">
              <SelectRow
                id="position"
                label="位置:"
                value="右"
                labelWidth="w-[61px]"
                textPad="pl-8"
                icon={
                  <Svg>
                    <path d="M1.500 2.500h9v11h-9z" stroke="#a8a8b2" fill="#f8f8fa" />
                    <path d="M14 2v4" stroke="#d05050" strokeWidth="2" />
                    <path d="M14 6v3" stroke="#5aa890" strokeWidth="2" />
                    <path d="M14 9v5" stroke="#606ab8" strokeWidth="2" />
                  </Svg>
                }
              />
              <SelectRow id="textColor" label="文本颜色:" value="来自主题" labelWidth="w-[61px]" />
            </div>
          </fieldset>
        </div>
        <div className="flex flex-col gap-1">
          <SectionHead title="数字格式" />
          <SectionHead title="绘图阵列" />
          <SectionHead title="窗口设置" />
        </div>
      </div>
    </section>
  )
}

/* ---------- plot ---------- */

type Rgb = [number, number, number]

// rainbow colour table, potential in V
const ramp: [number, Rgb][] = [
  [-0.186, [28, 8, 128]],
  [-0.17, [38, 28, 196]],
  [-0.155, [52, 76, 232]],
  [-0.14, [62, 150, 248]],
  [-0.13, [64, 204, 255]],
  [-0.118, [64, 255, 236]],
  [-0.1, [96, 255, 150]],
  [-0.083, [170, 255, 72]],
  [-0.07, [216, 255, 28]],
  [-0.06, [222, 216, 0]],
  [-0.048, [230, 140, 8]],
  [-0.038, [222, 64, 12]],
  [-0.028, [214, 14, 4]],
  [-0.02, [196, 0, 10]],
  [-0.01, [140, 0, 6]],
  [-0.002, [96, 0, 0]],
]

function colorAt(v: number) {
  const c = Math.max(ramp[0][0], Math.min(ramp[ramp.length - 1][0], v))
  let i = 0
  while (i < ramp.length - 2 && c > ramp[i + 1][0]) i++
  const [v0, a] = ramp[i]
  const [v1, b] = ramp[i + 1]
  const t = (c - v0) / (v1 - v0)
  return `rgb(${a.map((n, k) => Math.round(n + (b[k] - n) * t)).join(',')})`
}

// sampled potential (mV, sign dropped) on the x/y nodes below
const xs = [0, 0.4, 0.7, 0.85, 0.95, 1.0, 1.05, 1.1, 1.15, 1.2, 1.25, 1.3]
const ys = [0, 0.05, 0.1, 0.15, 0.2, 0.325, 0.45, 0.5, 0.55, 0.6, 0.65]
const samples = [
  [46, 50, 55, 60, 66, 71, 77, 85, 98, 114, 126, 133],
  [43, 45, 49, 51, 55, 59, 65, 74, 88, 107, 120, 130],
  [31, 31, 32, 34, 36, 39, 46, 57, 73, 92, 109, 124],
  [14, 14, 14, 14, 16, 17, 19, 26, 39, 70, 90, 108],
  [10, 10, 10, 10, 11, 12, 13, 15, 25, 57, 78, 96],
  [6, 6, 6, 6, 7, 8, 9, 11, 20, 45, 67, 73],
  [5, 5, 5, 5, 6, 7, 9, 14, 22, 55, 75, 87],
  [8, 8, 8, 8, 10, 12, 15, 20, 31, 65, 84, 104],
  [14, 14, 15, 18, 21, 23, 27, 35, 55, 77, 104, 136],
  [18, 18, 19, 24, 31, 38, 47, 58, 77, 109, 146, 174],
  [20, 20, 22, 29, 42, 50, 59, 71, 95, 131, 166, 184],
]

function interpolate(nodes: number[], vals: number[], at: number) {
  const last = nodes.length - 1
  let i = 0
  while (i < last - 1 && at > nodes[i + 1]) i++
  const h = nodes[i + 1] - nodes[i]
  const t = (at - nodes[i]) / h
  const slope = (k: number) => {
    if (k === 0) return (vals[1] - vals[0]) / (nodes[1] - nodes[0])
    if (k === last) return (vals[last] - vals[last - 1]) / (nodes[last] - nodes[last - 1])
    const a = (vals[k] - vals[k - 1]) / (nodes[k] - nodes[k - 1])
    const b = (vals[k + 1] - vals[k]) / (nodes[k + 1] - nodes[k])
    return a * b <= 0 ? 0 : (2 * a * b) / (a + b)
  }
  const t2 = t * t
  const t3 = t2 * t
  return (
    (2 * t3 - 3 * t2 + 1) * vals[i] +
    (t3 - 2 * t2 + t) * h * slope(i) +
    (3 * t2 - 2 * t3) * vals[i + 1] +
    (t3 - t2) * h * slope(i + 1)
  )
}

const SCALE = 488 // pixels per mm
const px = (x: number) => 138 + x * SCALE
const py = (y: number) => 471 - y * SCALE

function Field() {
  const strips = useMemo(() => {
    const n = 159
    const w = 1.3 / n
    return Array.from({ length: n }, (_, i) => {
      const x = (i + 0.5) * w
      const column = samples.map((row) => interpolate(xs, row, x))
      const stops = Array.from({ length: 40 }, (_, k) => {
        const f = k / 39
        return { f, color: colorAt(-interpolate(ys, column, 0.65 * (1 - f)) / 1000) }
      })
      return { x: i * w, w, stops }
    })
  }, [])

  return (
    <>
      <defs>
        {strips.map((s, i) => (
          <linearGradient key={i} id={`strip${i}`} x1="0" y1="0" x2="0" y2="1">
            {s.stops.map((p) => (
              <stop key={p.f} offset={p.f} stopColor={p.color} />
            ))}
          </linearGradient>
        ))}
      </defs>
      {strips.map((s, i) => (
        <rect
          key={i}
          x={px(s.x)}
          y={py(0.65)}
          width={Math.min(s.w * SCALE + 1, px(1.3) - px(s.x))}
          height={0.65 * SCALE}
          fill={`url(#strip${i})`}
        />
      ))}
    </>
  )
}

function Arrow({ x, y, dx, dy, w = 1 }: { x: number; y: number; dx: number; dy: number; w?: number }) {
  const len = Math.hypot(dx, dy)
  const ux = dx / len
  const uy = dy / len
  const head = Math.min(5, len * 0.35)
  const hx = x + dx - ux * head
  const hy = y + dy - uy * head
  const s = head * 0.3
  return (
    <>
      <path d={`M${x} ${y}L${hx} ${hy}`} stroke="#e8a8a0" strokeWidth={w} />
      <path d={`M${x + dx} ${y + dy}L${hx - uy * s} ${hy + ux * s}L${hx + uy * s} ${hy - ux * s}z`} fill="#f0b8ae" />
    </>
  )
}

function Arrows() {
  const cols = Array.from({ length: 12 }, (_, k) => px(0.04 + k * 0.0871))
  const right = [-4, -3, -1, 0, 1, 1, 3, 5, 7]
  return (
    <g opacity="0.8">
      {cols.map((x, k) => (
        <g key={k}>
          <Arrow x={x} y={369} dx={k === 11 ? 3 : 0.01} dy={13} />
          <Arrow x={x} y={390} dx={k === 11 ? 4 : 0.01} dy={13} />
          <Arrow x={x} y={413} dx={k === 11 ? 1 : 0.01} dy={10} w={0.6} />
          {k > 0 && <Arrow x={x} y={k === 11 ? 231 : 229} dx={k === 11 ? 5 : 0.01} dy={k === 11 ? -7 : -4} w={0.7} />}
          {k > 6 && <Arrow x={x} y={251} dx={k === 11 ? 2 : 0.01} dy={-6} w={0.7} />}
        </g>
      ))}
      <Arrow x={661} y={232} dx={13} dy={-9} w={1.3} />
      <Arrow x={661} y={257} dx={12} dy={-15} w={1.3} />
      <Arrow x={661} y={364} dx={11} dy={23} w={1.5} />
      <Arrow x={661} y={389} dx={12} dy={15} w={1.3} />
      {right.map((dy, k) => (
        <Arrow key={k} x={703} y={231 + k * 21 - dy / 2} dx={12} dy={dy} />
      ))}
    </g>
  )
}

const xTicks = [0, 0.2, 0.4, 0.6, 0.8, 1, 1.2, 1.4]
const yTicks = [0.8, 0.7, 0.6, 0.5, 0.4, 0.3, 0.2, 0.1, 0, -0.1, -0.2]
const legendTicks = [-0.02, -0.04, -0.06, -0.08, -0.1, -0.12, -0.14, -0.16, -0.18]
const legendTop = -0.002
const legendBottom = -0.1855
const ly = (v: number) => 115 + ((-0.02 - v) * 2840)

function Plot() {
  return (
    <svg
      viewBox="0 0 952 612"
      className="block w-full font-['DejaVu_Sans','Noto_Sans_CJK_SC',sans-serif] text-[12px]"
      role="img"
      aria-label="电解质电位分布图"
    >
      <path d="M0 0h952v612H0z" fill="#fffeff" />
      <g fill="#3a3a42">
        <text x="16" y="25">时间=3000 s</text>
        <text x="313" y="25">表面: 电解质电位 (V)</text>
        <text x="434" y="25">面上箭头: 电解质电流密度矢量</text>
        <text x="2" y="39">mm</text>
        <text x="842" y="607">mm</text>
      </g>
      <path d="M48.500 33.500h814v557h-814z" stroke="#5c5c68" fill="none" />
      <g fill="#3a3a42" stroke="none">
        {xTicks.map((t) => (
          <text key={t} x={px(t)} y="607" textAnchor="middle">{t}</text>
        ))}
        {yTicks.map((t) => (
          <text key={t} x="43" y={py(t) + 4} textAnchor="end">{t}</text>
        ))}
        {legendTicks.map((t) => (
          <text key={t} x="906" y={ly(t) + 4}>{t}</text>
        ))}
      </g>
      <g stroke="#5c5c68">
        {xTicks.map((t) => (
          <path key={t} d={`M${px(t)} 34v5M${px(t)} 591v-5`} />
        ))}
        {yTicks.map((t) => (
          <path key={t} d={`M49 ${py(t)}h5M862 ${py(t)}h-5`} />
        ))}
      </g>

      <Field />
      <path d={`M${px(0) - 2} ${py(0.45)}H${px(1.1)}V${py(0.2)}H${px(0) - 2}z`} fill="#fffeff" />
      <path
        d={`M${px(0)} ${py(0.45)}V${py(0.65)}H${px(1.3)}V${py(0)}H${px(0)}V${py(0.2)}H${px(1.1)}V${py(0.45)}z`}
        stroke="#2c1418"
        fill="none"
      />
      <path d={`M${px(0)} ${py(0.5)}H${px(1.15)}V${py(0.15)}H${px(0)}`} stroke="#2c0408" fill="none" />
      <Arrows />

      <defs>
        <linearGradient id="legend" x1="0" y1="0" x2="0" y2="1">
          {[...ramp].reverse().map(([v, c]) => (
            <stop
              key={v}
              offset={Math.max(0, Math.min(1, (legendTop - v) / (legendTop - legendBottom)))}
              stopColor={`rgb(${c.join(',')})`}
            />
          ))}
        </linearGradient>
      </defs>
      <rect x="884" y="64" width="15" height="521" fill="url(#legend)" stroke="#5a3a40" />
      {legendTicks.map((t) => (
        <path key={t} d={`M884 ${ly(t)}h3M899 ${ly(t)}h-3`} stroke="#44343c" />
      ))}
    </svg>
  )
}

function Graphics() {
  return (
    <section className="flex flex-col border border-[#dcdce6] bg-[#fbfbff]">
      <div className="flex items-end gap-2 border-b border-[#e4e3ec] pt-[5px] pl-[6px]">
        <Tab label="图形" width="w-9" active />
        <Tab label="收敛图 1" width="w-[80px]" />
        <Tab label="收敛图 2" width="w-[80px]" />
        <PanelTools />
      </div>
      <div className="flex h-7 items-center gap-[5px] pl-[6px]">
        <ToolButton icon="zoomIn" label="放大" />
        <ToolButton icon="zoomOut" label="缩小" />
        <ToolButton icon="zoomBox" label="缩放框" menu />
        <ToolButton icon="move" label="缩放到窗口大小" />
        <span className="h-4 w-px bg-[#e2e2e8]" />
        <ToolButton icon="axes" label="坐标轴" menu />
        <span className="ml-1 h-4 w-px bg-[#e2e2e8]" />
        <span className="flex">
          {['grid', 'legend'].map((name) => (
            <button
              key={name}
              type="button"
              aria-label={name === 'grid' ? '显示网格' : '显示图例'}
              className="flex h-5 w-[21px] items-center justify-center border border-[#66a8da] bg-[#8cc4ee]"
            >
              <Icon name={name} />
            </button>
          ))}
        </span>
        <ToolButton icon="ring" label="场景光" menu />
        <ToolButton icon="camera" label="快照" />
        <ToolButton icon="print" label="打印" />
      </div>
      <Plot />
    </section>
  )
}

function Messages() {
  return (
    <section className="flex flex-1 flex-col border border-[#dcdce6] bg-[#fafcff] px-1 pb-1">
      <div className="flex items-end gap-2 border-b border-[#e0e4ec] pt-[6px] pl-px">
        <button
          type="button"
          className="flex h-6 w-[54px] items-center gap-[7px] border border-b-0 border-[#e2e2ee] bg-white pl-[3px] text-[14px] leading-5 text-[#4f62a8]"
        >
          消息
          <svg width="7" height="7" viewBox="0 0 7 7" aria-hidden="true"><path d="M1 1l5 5M6 1L1 6" stroke="#c4c4cc" /></svg>
        </button>
        <Tab label="进度" width="w-9" />
        <Tab label="日志" width="w-9" />
        <Tab label="表格" width="w-[52px]" />
        <div className="ml-auto flex h-6 items-center gap-[7px]">
          <Caret className="fill-[#44444c]" />
          <Pin />
        </div>
      </div>
      <div className="flex h-[28px] items-center gap-[2px] border-b border-[#e4e4ee] pl-px">
        <button type="button" aria-label="清除">
          <Icon name="broom" />
        </button>
        <button type="button" aria-label="滚动锁定" className="flex h-5 w-5 items-center justify-center border border-[#58a4dc] bg-[#84c0ec]">
          <Icon name="scroll" />
        </button>
      </div>
      <div className="flex-1 border-b border-[#e4e4ee] pt-px pl-[3px] text-[12px] leading-4 text-[#26262c]">
        <p>求解的自由度数:&nbsp; 2681&nbsp; (加上 750 个内部自由度)&nbsp; 。</p>
        <p>求解的自由度数:&nbsp; 7756&nbsp; (加上 750 个内部自由度)&nbsp; 。</p>
        <p>求解时间 (研究 1): 16 s。</p>
      </div>
    </section>
  )
}

export default function App() {
  return (
    <div className="flex min-h-screen flex-col bg-[#fbfaff] font-['Noto_Sans','Noto_Sans_CJK_SC',sans-serif]">
      <TitleBar />
      <div className="flex flex-1 flex-col border-x-4 border-[#a6a6ab] pt-[3px] pr-2 pl-[5px]">
        <MenuBar />
        <Ribbon />
        <main className="mt-[3px] flex flex-1 gap-1">
          <ModelBuilder />
          <Settings />
          <div className="flex min-w-0 flex-1 flex-col gap-1">
            <Graphics />
            <Messages />
          </div>
        </main>
        <footer className="flex h-[37px] items-center pt-1 pl-[1227px] text-[12px] leading-4 text-[#2a2a30]">
          1.39 GB | 1.7 GB
        </footer>
      </div>
      <div className="h-[5px] bg-linear-to-r from-[#1c2622] via-[#5c464e] to-[#30262c]" />
    </div>
  )
}
